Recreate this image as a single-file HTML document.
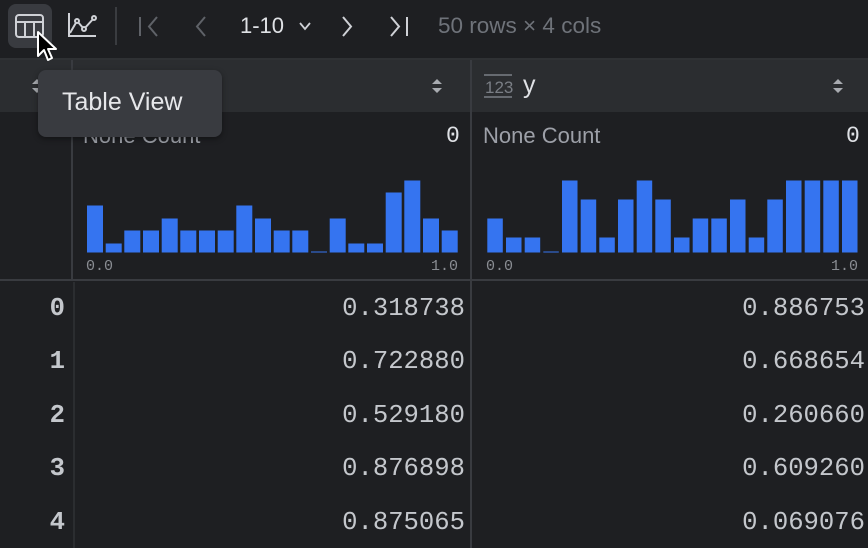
<!DOCTYPE html>
<html><head><style>
body{margin:0;width:868px;height:548px;background:#1e1f22;overflow:hidden;position:relative;font-family:"Liberation Sans",sans-serif}
.a{position:absolute}
.mono{font-family:"Liberation Mono",monospace}
.num{position:absolute;font-family:"Liberation Mono",monospace;font-size:25.6px;color:#c4c7cc;text-align:right;width:200px}
</style></head><body>
<div class="a" style="left:0;top:0;width:868px;height:58px;background:#1e1f22;border-bottom:2px solid #2f3134"></div>
<div class="a" style="left:8px;top:4px;width:44px;height:44px;background:#393b40;border-radius:8px"></div>
<svg class="a" style="left:0;top:0" width="620" height="58" fill="none" stroke="#cfd1d6" stroke-width="2">
<rect x="16" y="15" width="27" height="22" rx="3"/><line x1="16" y1="22" x2="43" y2="22"/><line x1="25" y1="22" x2="25" y2="37"/><line x1="34" y1="22" x2="34" y2="37"/>
<path d="M69 13 V36 H96"/><path d="M70 33 L77 21 L84 29 L94 18"/><circle cx="77" cy="21" r="2" fill="#1e1f22"/><circle cx="84" cy="29" r="2" fill="#1e1f22"/><circle cx="94" cy="18" r="2" fill="#1e1f22"/>
<line x1="116" y1="7" x2="116" y2="45" stroke="#3a3c40"/>
<g stroke="#5f6268"><line x1="140" y1="17" x2="140" y2="36"/><path d="M157 17 L149 26.5 L157 36"/><path d="M205 17 L197 26.5 L205 36"/></g>
<path d="M300 23 L305 29 L310 23" stroke-width="1.8"/>
<path d="M343 17 L351 26.5 L343 36"/><path d="M391 17 L399 26.5 L391 36"/><line x1="407" y1="17" x2="407" y2="36"/>
</svg>
<div class="a" style="left:240px;top:13px;font-size:22px;color:#dfe1e5">1-10</div>
<div class="a" style="left:438px;top:13px;font-size:22.5px;color:#6f737a">50 rows × 4 cols</div>
<div class="a" style="left:0;top:60px;width:868px;height:52px;background:#2b2d30"></div>
<div class="a" style="left:71px;top:60px;width:2px;height:220px;background:#393b40"></div>
<div class="a" style="left:470px;top:60px;width:2px;height:488px;background:#393b40"></div>
<div class="a" style="left:73px;top:282px;width:2px;height:266px;background:#2b2d30"></div>
<div class="a" style="left:0;top:279px;width:868px;height:2px;background:#393b40"></div>
<svg class="a" style="left:0;top:60px" width="868" height="52" fill="#a8abb0">
<path d="M32 24 L37 19 L42 24Z M32 28 L37 33 L42 28Z"/>
<path d="M432 24 L437 19 L442 24Z M432 28 L437 33 L442 28Z"/>
<path d="M833 24 L838 19 L843 24Z M833 28 L838 33 L843 28Z"/>
<line x1="484" y1="15" x2="512" y2="15" stroke="#7a7e85" stroke-width="1.5"/><line x1="484" y1="37" x2="512" y2="37" stroke="#7a7e85" stroke-width="1.5"/>
<text x="485" y="33" font-size="17" fill="#7a7e85" font-family="Liberation Sans">123</text>
</svg>
<div class="a" style="left:523px;top:71px;font-size:25px;color:#dfe1e5">y</div>
<div class="a" style="left:83px;top:123px;font-size:22px;color:#9da0a8">None Count</div>
<div class="a mono" style="left:446px;top:123px;font-size:23px;color:#dfe1e5">0</div>
<div class="a" style="left:483px;top:123px;font-size:22px;color:#9da0a8">None Count</div>
<div class="a mono" style="left:846px;top:123px;font-size:23px;color:#dfe1e5">0</div>
<svg class="a" style="left:0;top:0" width="868" height="280" fill="#3574f0">
<g>
<rect x="87" y="205.5" width="16" height="47"/><rect x="105.7" y="243.5" width="16" height="9"/><rect x="124.3" y="230.5" width="16" height="22"/><rect x="143" y="230.5" width="16" height="22"/><rect x="161.7" y="218.5" width="16" height="34"/><rect x="180.3" y="230.5" width="16" height="22"/><rect x="199" y="230.5" width="16" height="22"/><rect x="217.7" y="230.5" width="16" height="22"/><rect x="236.3" y="205.5" width="16" height="47"/><rect x="255" y="218.5" width="16" height="34"/><rect x="273.7" y="230.5" width="16" height="22"/><rect x="292.3" y="230.5" width="16" height="22"/><rect x="311" y="251.5" width="16" height="1"/><rect x="329.7" y="218.5" width="16" height="34"/><rect x="348.3" y="243.5" width="16" height="9"/><rect x="367" y="243.5" width="16" height="9"/><rect x="385.7" y="192.5" width="16" height="60"/><rect x="404.3" y="180.5" width="16" height="72"/><rect x="423" y="218.5" width="16" height="34"/><rect x="441.7" y="230.5" width="16" height="22"/>
</g>
<g>
<rect x="487.3" y="218.5" width="15.5" height="34"/><rect x="506" y="237.5" width="15.5" height="15"/><rect x="524.7" y="237.5" width="15.5" height="15"/><rect x="543.3" y="251.5" width="15.5" height="1"/><rect x="562" y="180.5" width="15.5" height="72"/><rect x="580.7" y="199.5" width="15.5" height="53"/><rect x="599.3" y="237.5" width="15.5" height="15"/><rect x="618" y="199.5" width="15.5" height="53"/><rect x="636.7" y="180.5" width="15.5" height="72"/><rect x="655.3" y="199.5" width="15.5" height="53"/><rect x="674" y="237.5" width="15.5" height="15"/><rect x="692.7" y="218.5" width="15.5" height="34"/><rect x="711.3" y="218.5" width="15.5" height="34"/><rect x="730" y="199.5" width="15.5" height="53"/><rect x="748.7" y="237.5" width="15.5" height="15"/><rect x="767.3" y="199.5" width="15.5" height="53"/><rect x="786" y="180.5" width="15.5" height="72"/><rect x="804.7" y="180.5" width="15.5" height="72"/><rect x="823.3" y="180.5" width="15.5" height="72"/><rect x="842" y="180.5" width="15.5" height="72"/>
</g>
<g font-family="Liberation Mono" font-size="15" fill="#8a8d93">
<text x="86" y="270">0.0</text><text x="458" y="270" text-anchor="end">1.0</text>
<text x="486" y="270">0.0</text><text x="858" y="270" text-anchor="end">1.0</text>
</g>
</svg>
<div class="num" style="left:-135px;top:294px;font-weight:bold">0</div>
<div class="num" style="left:-135px;top:347px;font-weight:bold">1</div>
<div class="num" style="left:-135px;top:401px;font-weight:bold">2</div>
<div class="num" style="left:-135px;top:454px;font-weight:bold">3</div>
<div class="num" style="left:-135px;top:508px;font-weight:bold">4</div>
<div class="num" style="left:265px;top:294px">0.318738</div>
<div class="num" style="left:265px;top:347px">0.722880</div>
<div class="num" style="left:265px;top:401px">0.529180</div>
<div class="num" style="left:265px;top:454px">0.876898</div>
<div class="num" style="left:265px;top:508px">0.875065</div>
<div class="num" style="left:665px;top:294px">0.886753</div>
<div class="num" style="left:665px;top:347px">0.668654</div>
<div class="num" style="left:665px;top:401px">0.260660</div>
<div class="num" style="left:665px;top:454px">0.609260</div>
<div class="num" style="left:665px;top:508px">0.069076</div>
<div class="a" style="left:38px;top:70px;width:184px;height:67px;background:#393b40;border-radius:8px;box-shadow:0 2px 6px rgba(0,0,0,.4)"></div>
<div class="a" style="left:62px;top:88px;font-size:25px;color:#e6e7ea">Table View</div>
<svg class="a" style="left:36px;top:30px" width="30" height="40"><path d="M2 2 L2 26 L8 20 L12 30 L16 28 L12 19 L20 19 Z" fill="#000" stroke="#fff" stroke-width="2" stroke-linejoin="round"/></svg>
</body></html>
